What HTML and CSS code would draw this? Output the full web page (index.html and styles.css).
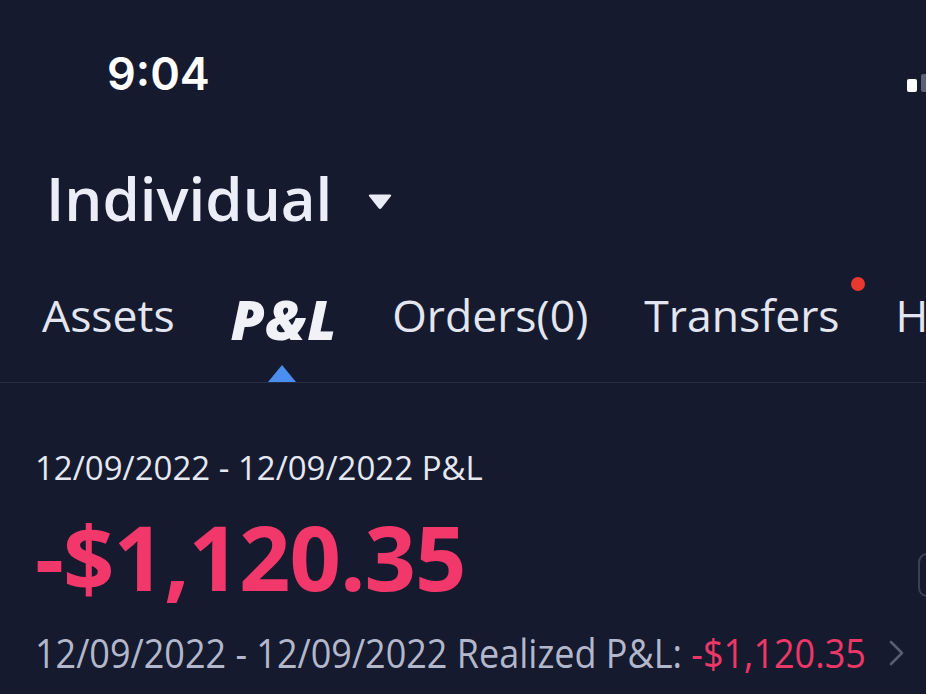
FILE: index.html
```html
<!DOCTYPE html>
<html lang="en">
<head>
  <meta charset="UTF-8" />
  <meta name="viewport" content="width=device-width, initial-scale=1.0" />
  <title>Account P&amp;L</title>
  <link rel="stylesheet" href="styles.css">
</head>
<body>
  <div class="status-bar">
    <span class="time">9:04</span>
    <div class="signal">
      <span class="bar on"></span>
      <span class="bar off"></span>
    </div>
  </div>

  <div class="account">
    <span class="account-name">Individual</span>
    <svg class="caret" width="26" height="17" viewBox="0 0 26 17">
      <path d="M3 1.5 H23 Q25 1.5 23.8 3.3 L14.6 15 Q13 16.8 11.4 15 L2.2 3.3 Q1 1.5 3 1.5 Z" fill="#e9ebf5"/>
    </svg>
  </div>

  <div class="tabs">
    <span class="tab">Assets</span>
    <span class="tab active">P&amp;L</span>
    <span class="tab">Orders(0)</span>
    <span class="tab dot">Transfers</span>
    <span class="tab">History</span>
  </div>

  <div class="pnl">
    <div class="pnl-range">12/09/2022 - 12/09/2022 P&amp;L</div>
    <div class="pnl-row">
      <span class="pnl-amount">-$1,120.35</span>
      <span class="pnl-btn"></span>
    </div>
    <div class="realized">
      <span class="realized-text">12/09/2022 - 12/09/2022 Realized P&amp;L: <span class="neg">-$1,120.35</span></span>
      <svg class="chevron" width="18" height="26" viewBox="0 0 18 26">
        <path d="M3 2 L14 13 L3 24" fill="none" stroke="#575d72" stroke-width="2.6" stroke-linecap="round" stroke-linejoin="round"/>
      </svg>
    </div>
  </div>
</body>
</html>
```

FILE: styles.css
```css
body {
  margin: 0;
  padding: 0;
  background: #151a2e;
  color: #e8eaf4;
  font-family: "Open Sans", "Noto Sans", sans-serif;
  width: 926px;
  height: 694px;
  overflow: hidden;
}

.status-bar {
  display: flex;
  align-items: flex-start;
  padding: 51px 0 0 107px;
  height: 47px;
}

.time {
  font-family: Inter, "Liberation Sans", sans-serif;
  font-weight: 600;
  font-size: 45px;
  line-height: 1;
  color: #ffffff;
}

.signal {
  display: flex;
  align-items: flex-end;
  gap: 4px;
  margin-left: auto;
  margin-right: -5px;
  margin-top: 23px;
}

.signal .bar {
  display: block;
  width: 10px;
  border-radius: 2px;
}

.signal .on {
  height: 13px;
  background: #ffffff;
}

.signal .off {
  height: 18px;
  background: #5b6073;
}

.account {
  display: flex;
  align-items: center;
  margin-top: 70px;
  padding-left: 46px;
}

.account-name {
  font-size: 60px;
  font-weight: 600;
  line-height: 1;
  color: #eceef7;
}

.caret {
  margin-left: 35px;
  margin-top: 6px;
}

.tabs {
  display: flex;
  align-items: flex-start;
  gap: 56px;
  padding: 65px 0 36px 42px;
  border-bottom: 1px solid #272d42;
  white-space: nowrap;
  overflow: hidden;
  position: relative;
}

.tab {
  font-size: 44.5px;
  line-height: 1;
  color: #e3e6f1;
  position: relative;
}

.tab.active {
  font-size: 55px;
  font-weight: 800;
  font-style: italic;
  letter-spacing: 1px;
  color: #f1f2f8;
  margin-top: -2px;
  margin-right: -1px;
}

.tab.active::after {
  content: "";
  position: absolute;
  left: 50%;
  bottom: -36px;
  margin-left: -16px;
  border-left: 14px solid transparent;
  border-right: 14px solid transparent;
  border-bottom: 17px solid #4a8ef0;
}

.tab.dot::after {
  content: "";
  position: absolute;
  right: -25px;
  top: -16px;
  width: 14px;
  height: 14px;
  border-radius: 50%;
  background: #e8392f;
}

.pnl {
  padding: 68px 0 0 35px;
}

.pnl-range {
  font-size: 33px;
  line-height: 1;
  color: #e6e8f1;
}

.pnl-row {
  display: flex;
  align-items: flex-end;
  margin-top: 27px;
}

.pnl-amount {
  font-size: 90px;
  font-weight: 700;
  line-height: 1;
  letter-spacing: -1px;
  color: #f2386a;
}

.pnl-btn {
  margin-left: auto;
  margin-right: -52px;
  margin-bottom: 4px;
  width: 60px;
  height: 44px;
  border: 2px solid #3a4055;
  border-radius: 9px;
  box-sizing: border-box;
}

.realized {
  display: flex;
  align-items: center;
  margin-top: 32px;
  padding-right: 20px;
  height: 40px;
}

.realized-text {
  flex: 1;
  min-width: 0;
  font-size: 40px;
  line-height: 1;
  white-space: nowrap;
  color: #b3b7cb;
  transform: scaleX(0.9);
  transform-origin: left center;
}

.realized .neg {
  color: #ec3868;
}

.chevron {
  flex: none;
}
```
